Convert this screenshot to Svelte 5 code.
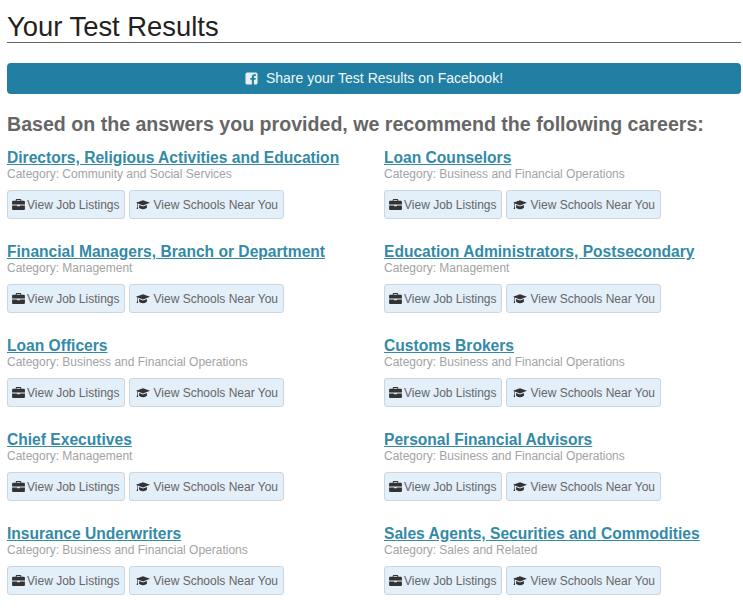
<script>
  const careers = [
    ['Directors, Religious Activities and Education', 'Community and Social Services'],
    ['Loan Counselors', 'Business and Financial Operations'],
    ['Financial Managers, Branch or Department', 'Management'],
    ['Education Administrators, Postsecondary', 'Management'],
    ['Loan Officers', 'Business and Financial Operations'],
    ['Customs Brokers', 'Business and Financial Operations'],
    ['Chief Executives', 'Management'],
    ['Personal Financial Advisors', 'Business and Financial Operations'],
    ['Insurance Underwriters', 'Business and Financial Operations'],
    ['Sales Agents, Securities and Commodities', 'Sales and Related'],
  ];
</script>

<div class="page">
  <h1>Your Test Results</h1>
  <a class="share" href="#share">
    <svg class="fb" viewBox="0 0 14 14" width="13" height="13">
      <path fill="#e8f0f4" d="M2.5 0.5h9a2 2 0 0 1 2 2v9a2 2 0 0 1-2 2H9.600V8.400h1.700l.3-2H9.600V5.200c0-.6.3-1 1-1h1.100V2.400H10.200C8.400 2.400 7.400 3.500 7.400 5.100v1.300H5.700v2h1.700v5.100H2.500a2 2 0 0 1-2-2v-9a2 2 0 0 1 2-2z"/>
    </svg>
    Share your Test Results on Facebook!
  </a>
  <h2>Based on the answers you provided, we recommend the following careers:</h2>
  <div class="careers">
    {#each careers as [name, category]}
      <div class="career">
        <a class="name" href="#career">{name}</a>
        <div class="category">Category: {category}</div>
        <div class="actions">
          <a class="btn" href="#jobs">
            <svg viewBox="0 0 14 12" width="13" height="11">
              <path fill="#333" d="M5 0h4a1 1 0 0 1 1 1v1h3a1 1 0 0 1 1 1v3H0V3a1 1 0 0 1 1-1h3V1a1 1 0 0 1 1-1zm0 1v1h4V1H5zM0 7h5.500v1h3V7H14v4a1 1 0 0 1-1 1H1a1 1 0 0 1-1-1V7z"/>
            </svg>
            View Job Listings
          </a>
          <a class="btn wide" href="#schools">
            <svg viewBox="0 0 16 12" width="14" height="11">
              <path fill="#333" d="M8 1l8 3-8 3-6-2.200V8.600l.5 2.400H.700l.6-2.400V4.500L0 4z"/>
              <path fill="#333" d="M3.500 6.500V9.500c0 1 2 1.800 4.500 1.800s4.500-.8 4.500-1.800V6.500L8 8.200z"/>
            </svg>
            View Schools Near You
          </a>
        </div>
      </div>
    {/each}
  </div>
</div>

<style>
  :global(body) {
    margin: 0;
    background: #fff;
    font-family: "Liberation Sans", Arial, sans-serif;
  }

  .page {
    padding: 12px 2px 0 7px;
  }

  h1 {
    margin: 0;
    font-size: 27.4px;
    line-height: 30px;
    font-weight: 400;
    color: #222;
    border-bottom: 1px solid #666;
  }

  .share {
    display: flex;
    align-items: center;
    justify-content: center;
    gap: 8px;
    box-sizing: border-box;
    height: 31px;
    padding-bottom: 1px;
    margin-top: 20px;
    background: #217fa3;
    border-radius: 4px;
    color: #f2f7f9;
    font-size: 14px;
    text-decoration: none;
  }

  .fb {
    flex-shrink: 0;
  }

  h2 {
    margin: 18px 0 0;
    font-size: 19.6px;
    line-height: 24px;
    font-weight: 700;
    color: #666;
    white-space: nowrap;
  }

  .careers {
    display: grid;
    grid-template-columns: 377px 1fr;
    row-gap: 23px;
    margin-top: 12px;
  }

  .name {
    display: block;
    width: fit-content;
    font-size: 15.6px;
    line-height: 19px;
    font-weight: 700;
    color: #338aa6;
    text-decoration: underline;
  }

  .category {
    font-size: 12px;
    line-height: 14px;
    color: #a3a3a3;
  }

  .actions {
    display: flex;
    gap: 4px;
    margin-top: 9px;
  }

  .btn {
    display: flex;
    align-items: center;
    gap: 2px;
    box-sizing: border-box;
    height: 29px;
    padding: 0 4px;
    background: #e3eff9;
    border: 1px solid #ccd6df;
    border-radius: 3px;
    color: #666;
    font-size: 12px;
    text-decoration: none;
    white-space: nowrap;
  }

  .btn.wide {
    gap: 4px;
    padding-left: 6px;
    padding-right: 5px;
  }
</style>
